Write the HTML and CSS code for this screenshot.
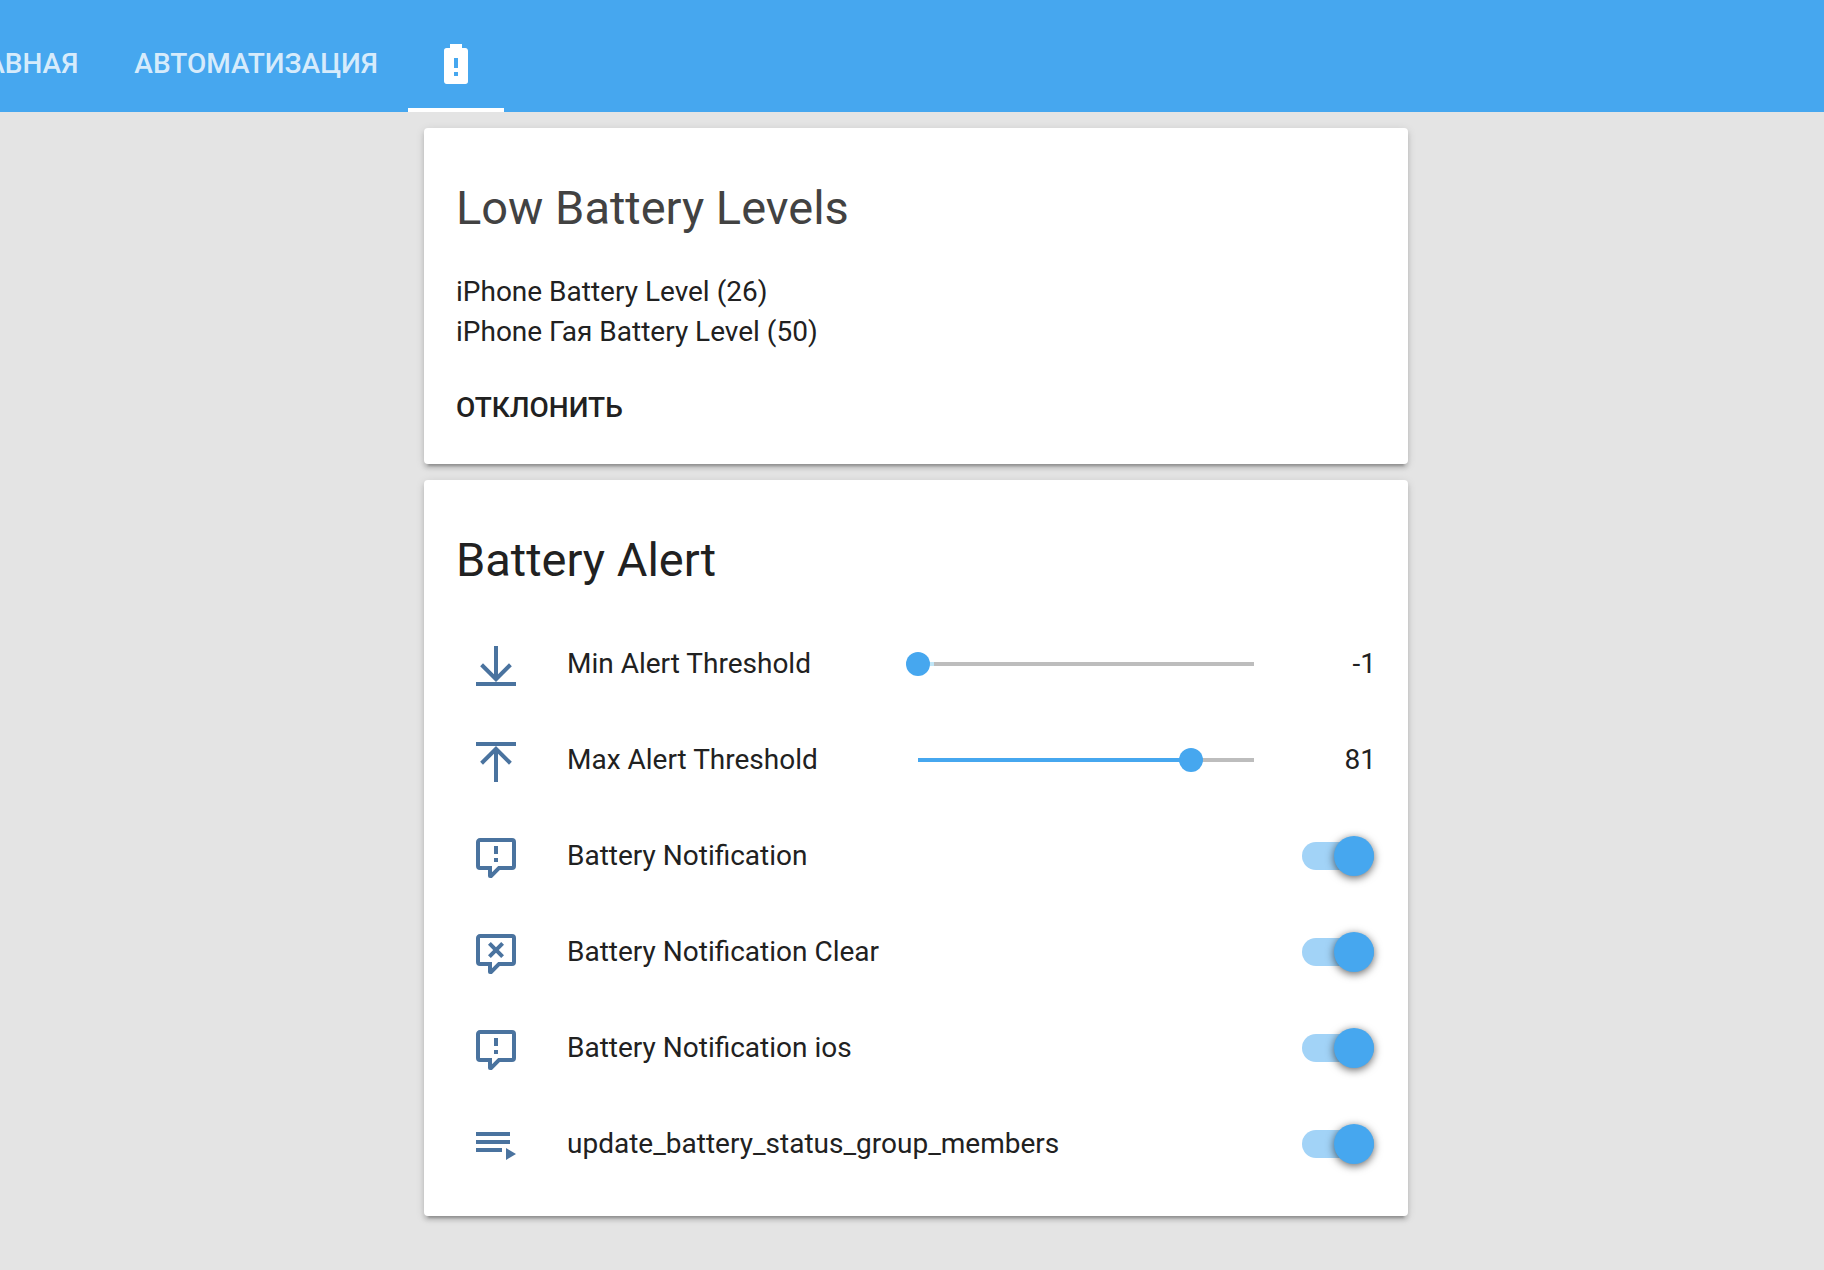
FILE: index.html
```html
<!DOCTYPE html>
<html lang="ru">
<head>
    <meta charset="UTF-8">
    <title>Battery Alert - Home Assistant</title>
    <link rel="stylesheet" href="styles.css">
</head>
<body>

<header class="toolbar">
    <nav class="tabs">
        <a href="#home" class="tab">Главная</a>
        <a href="#automation" class="tab">Автоматизация</a>
        <a href="#battery" class="tab tab-icon active" aria-label="Battery">
            <svg class="icon" viewBox="0 0 24 24"><path d="M13,14H11V9H13M13,18H11V16H13M16.67,4H15V2H9V4H7.33A1.33,1.33 0 0,0 6,5.33V20.67C6,21.4 6.6,22 7.33,22H16.67A1.33,1.33 0 0,0 18,20.67V5.33C18,4.6 17.4,4 16.67,4Z"/></svg>
        </a>
    </nav>
</header>

<main class="view">
    <section class="card">
        <h1 class="card-title muted">Low Battery Levels</h1>
        <p class="message">
            iPhone Battery Level (26)<br>
            iPhone Гая Battery Level (50)
        </p>
        <button type="button" class="dismiss">Отклонить</button>
    </section>

    <section class="card">
        <h1 class="card-title">Battery Alert</h1>
        <div class="rows">
            <div class="row">
                <span class="badge"><svg class="icon" viewBox="0 0 24 24"><path d="M19.92,12.08L12,20L4.08,12.08L5.5,10.67L11,16.17V2H13V16.17L18.5,10.66L19.92,12.08M12,20H2V22H22V20H12Z"/></svg></span>
                <label class="name" for="min">Min Alert Threshold</label>
                <input type="range" class="slider at-min" id="min" min="-1" max="100" value="-1" style="--fill: 0%">
                <output class="value" for="min">-1</output>
            </div>
            <div class="row">
                <span class="badge"><svg class="icon" viewBox="0 0 24 24"><path d="M4.08,11.92L12,4L19.92,11.92L18.5,13.33L13,7.83V22H11V7.83L5.5,13.33L4.08,11.92M12,4H22V2H2V4H12Z"/></svg></span>
                <label class="name" for="max">Max Alert Threshold</label>
                <input type="range" class="slider" id="max" min="-1" max="100" value="81" style="--fill: 81%">
                <output class="value" for="max">81</output>
            </div>
            <div class="row">
                <span class="badge"><svg class="icon" viewBox="0 0 24 24"><path d="M13,10H11V6H13V10M13,14H11V12H13V14M20,2A2,2 0 0,1 22,4V16A2,2 0 0,1 20,18H13.9L10.2,21.71C10,21.9 9.75,22 9.5,22H9A1,1 0 0,1 8,21V18H4A2,2 0 0,1 2,16V4C2,2.89 2.9,2 4,2H20M10,16V19.08L13.08,16H20V4H4V16H10Z"/></svg></span>
                <label class="name" for="notify">Battery Notification</label>
                <input type="checkbox" class="toggle" id="notify" checked>
            </div>
            <div class="row">
                <span class="badge"><svg class="icon" viewBox="0 0 24 24"><path d="M9,22A1,1 0 0,1 8,21V18H4A2,2 0 0,1 2,16V4C2,2.89 2.9,2 4,2H20A2,2 0 0,1 22,4V16A2,2 0 0,1 20,18H13.9L10.2,21.71C10,21.9 9.75,22 9.5,22H9M10,16V19.08L13.08,16H20V4H4V16H10M9.41,6L12,8.59L14.59,6L16,7.41L13.41,10L16,12.59L14.59,14L12,11.41L9.41,14L8,12.59L10.59,10L8,7.41L9.41,6Z"/></svg></span>
                <label class="name" for="clear">Battery Notification Clear</label>
                <input type="checkbox" class="toggle" id="clear" checked>
            </div>
            <div class="row">
                <span class="badge"><svg class="icon" viewBox="0 0 24 24"><path d="M13,10H11V6H13V10M13,14H11V12H13V14M20,2A2,2 0 0,1 22,4V16A2,2 0 0,1 20,18H13.9L10.2,21.71C10,21.9 9.75,22 9.5,22H9A1,1 0 0,1 8,21V18H4A2,2 0 0,1 2,16V4C2,2.89 2.9,2 4,2H20M10,16V19.08L13.08,16H20V4H4V16H10Z"/></svg></span>
                <label class="name" for="ios">Battery Notification ios</label>
                <input type="checkbox" class="toggle" id="ios" checked>
            </div>
            <div class="row">
                <span class="badge"><svg class="icon" viewBox="0 0 24 24"><path d="M19,9H2V11H19V9M19,5H2V7H19V5M2,15H15V13H2V15M17,13V19L22,16L17,13Z"/></svg></span>
                <label class="name" for="group">update_battery_status_group_members</label>
                <input type="checkbox" class="toggle" id="group" checked>
            </div>
        </div>
    </section>
</main>

</body>
</html>
```
FILE: styles.css
```css
:root {
    --primary: #46a7ef;
    --text: #212121;
    --track: #bdbdbd;
}
* {
    box-sizing: border-box;
}
body {
    margin: 0;
    background-color: #e4e4e4;
    color: var(--text);
    font-family: Roboto, "Noto Sans", sans-serif;
    font-size: 28px;
    line-height: 40px;
}
.icon {
    display: block;
    width: 48px;
    height: 48px;
    fill: currentColor;
}

/* toolbar */
.toolbar {
    background-color: var(--primary);
    padding-top: 16px;
}
/* the strip is scrolled to its end, so the first tab is cut off */
.tabs {
    display: flex;
    justify-content: flex-end;
    gap: 4px;
    width: 504px;
    height: 96px;
    overflow: hidden;
}
.tab {
    display: flex;
    flex: none;
    align-items: center;
    padding: 0 26px;
    color: rgba(255, 255, 255, 0.8);
    font-weight: 500;
    text-transform: uppercase;
    text-decoration: none;
}
.tab-icon {
    padding: 0 24px;
}
.tab.active {
    color: white;
    box-shadow: inset 0 -4px white;
}

/* cards */
.view {
    display: flex;
    flex-direction: column;
    gap: 16px;
    max-width: 1000px;
    margin: 0 auto;
    padding: 16px 4px 16px 12px;
}
.card {
    background-color: white;
    border-radius: 4px;
    padding: 48px 32px 32px;
    box-shadow: 0 4px 4px rgba(0, 0, 0, 0.14), 0 2px 10px rgba(0, 0, 0, 0.12), 0 6px 2px -4px rgba(0, 0, 0, 0.2);
}
.card-title {
    margin: 0 0 32px;
    font-size: 47px;
    font-weight: 400;
    line-height: 64px;
}
.card-title.muted {
    color: #424242;
}
.message {
    margin: 0;
}
.dismiss {
    display: block;
    height: 72px;
    margin: 20px 0 -12px;
    padding: 0;
    border: none;
    background: none;
    color: var(--text);
    font: inherit;
    font-weight: 500;
    text-transform: uppercase;
    cursor: pointer;
}

/* entity rows */
.rows {
    display: flex;
    flex-direction: column;
    gap: 16px;
}
.row {
    display: flex;
    align-items: center;
    height: 80px;
}
.badge {
    padding: 4px 16px 0;
    color: #4a739f;
}
.name {
    flex: 1;
    margin-left: 31px;
}
.value {
    width: 110px;
    text-align: right;
}

/* the track is inset by half a thumb at both ends */
.slider {
    appearance: none;
    width: 360px;
    height: 24px;
    margin: 0;
    background: none;
    cursor: pointer;
}
.slider::-webkit-slider-runnable-track {
    height: 24px;
    background: linear-gradient(to right, var(--primary) var(--fill), var(--track) var(--fill)) center / calc(100% - 24px) 4px no-repeat;
}
.slider.at-min::-webkit-slider-runnable-track {
    background-image: linear-gradient(to right, #c0e6f7 16px, var(--track) 16px);
}
.slider::-webkit-slider-thumb {
    appearance: none;
    width: 24px;
    height: 24px;
    border-radius: 50%;
    background-color: var(--primary);
}

/* switches */
.toggle {
    appearance: none;
    display: flex;
    align-items: center;
    width: 72px;
    height: 28px;
    margin: 0 2px 0 0;
    border-radius: 14px;
    background-color: var(--track);
    cursor: pointer;
}
.toggle::before {
    content: "";
    flex: none;
    width: 40px;
    height: 40px;
    border-radius: 50%;
    background-color: white;
    box-shadow: 0 2px 8px rgba(0, 0, 0, 0.6);
}
.toggle:checked {
    justify-content: flex-end;
    background-color: #a2d3f7;
}
.toggle:checked::before {
    background-color: var(--primary);
}
```
